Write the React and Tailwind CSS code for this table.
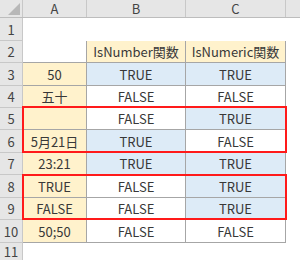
const rows = [
  { n: 1, h: "h-[23px]", cells: null },
  { n: 2, h: "h-[22px]", cells: [["", "w"], ["IsNumber関数", "o"], ["IsNumeric関数", "o"]] },
  { n: 3, h: "h-[23px]", cells: [["50", "o"], ["TRUE", "b"], ["TRUE", "b"]] },
  { n: 4, h: "h-[22px]", cells: [["五十", "o"], ["FALSE", "w"], ["FALSE", "w"]] },
  { n: 5, h: "h-[22px]", cells: [["", "o"], ["FALSE", "w"], ["TRUE", "b"]] },
  { n: 6, h: "h-[23px]", cells: [["5月21日", "o"], ["TRUE", "b"], ["FALSE", "w"]] },
  { n: 7, h: "h-[22px]", cells: [["23:21", "o"], ["TRUE", "b"], ["TRUE", "b"]] },
  { n: 8, h: "h-[23px]", cells: [["TRUE", "o"], ["FALSE", "w"], ["TRUE", "b"]] },
  { n: 9, h: "h-[22px]", cells: [["FALSE", "o"], ["FALSE", "w"], ["TRUE", "b"]] },
  { n: 10, h: "h-[23px]", cells: [["50;50", "o"], ["FALSE", "w"], ["FALSE", "w"]] },
  { n: 11, h: "h-[18px]", cells: null },
];

const widths = ["w-[64px]", "w-[99px]", "w-[100px]"];
const fills = { w: "bg-white", o: "bg-[#fff2cc]", b: "bg-[#ddebf7]" };

export default function App() {
  return (
    <div
      className="relative w-[300px] h-[260px] overflow-hidden bg-white text-[#383838] text-[13px]"
      style={{ fontFamily: '"Noto Sans CJK JP", "Noto Sans", sans-serif' }}
    >
      {/* column headers */}
      <div className="flex h-[18px] bg-[#e6e6e6] border-b border-[#bdbdbd] text-[#444]">
        <div className="relative w-[23px] border-r border-[#c8c8c8]">
          <svg className="absolute right-[2px] bottom-[2px]" width="12" height="12" viewBox="0 0 12 12">
            <polygon points="12,0 12,12 0,12" fill="#b8b8b8" />
          </svg>
        </div>
        {["A", "B", "C"].map((c, i) => (
          <div key={c} className={`${widths[i]} border-r border-[#c8c8c8] flex items-center justify-center leading-none`}>
            {c}
          </div>
        ))}
        <div className="flex-1" />
      </div>

      {rows.map((r, ri) => {
        const next = rows[ri + 1];
        const tableBottom = r.cells || (next && next.cells);
        return (
          <div key={r.n} className={`flex ${r.h}`}>
            <div className="w-[23px] shrink-0 bg-[#e6e6e6] border-r border-b border-[#c8c8c8] text-[#444] flex items-center justify-center leading-none">
              {r.n}
            </div>
            {[0, 1, 2].map((i) => {
              const cell = r.cells ? r.cells[i] : null;
              const bottom = tableBottom && r.n !== 11 ? "border-b border-[#a6a6a6]" : "border-b border-transparent";
              const right = cell ? "border-r border-[#a6a6a6]" : "border-r border-transparent";
              return (
                <div
                  key={i}
                  className={`${widths[i]} shrink-0 ${cell ? fills[cell[1]] : "bg-white"} ${bottom} ${right} flex items-center justify-center leading-none whitespace-nowrap`}
                >
                  {cell ? cell[0] : ""}
                </div>
              );
            })}
            <div className="flex-1 bg-white" />
          </div>
        );
      })}

      {/* highlight boxes */}
      <div className="absolute left-[22px] top-[106px] w-[265px] h-[47px] border-2 border-[#ff1a1a]" />
      <div className="absolute left-[22px] top-[174px] w-[265px] h-[46px] border-2 border-[#ff1a1a]" />
    </div>
  );
}
